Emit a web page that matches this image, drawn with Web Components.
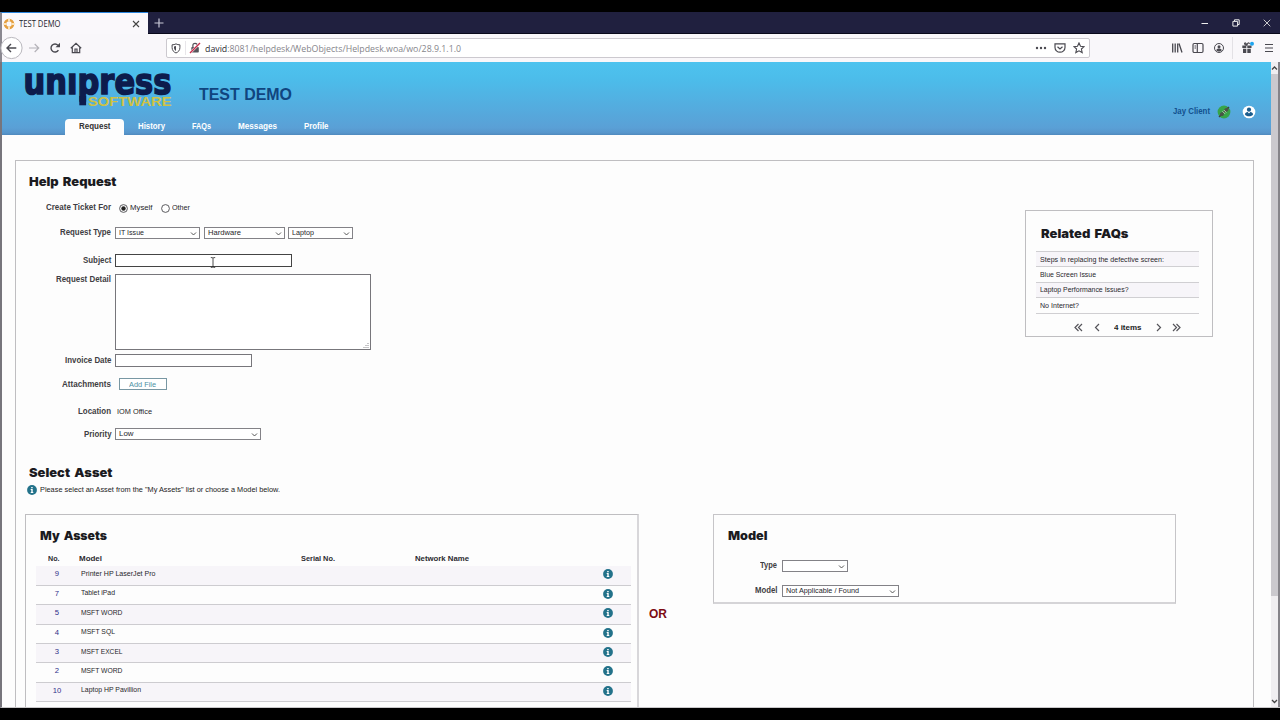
<!DOCTYPE html>
<html lang="en">
<head>
<meta charset="utf-8">
<title>TEST DEMO</title>
<style>
html,body{margin:0;height:100%;overflow:hidden;background:#000}
body{font-family:"Liberation Sans",Arial,sans-serif}
</style>
</head>
<body>
<app-window></app-window>
<script>
const define = (name, css, html) => customElements.define(name, class extends HTMLElement {
  connectedCallback() {
    if (this.shadowRoot) return;
    const root = this.attachShadow({ mode: 'open' });
    root.innerHTML = `<style>*{box-sizing:border-box}${css}</style>` + (typeof html === 'function' ? html(this) : html);
  }
});
const a = (el, n, d = '') => el.getAttribute(n) ?? d;

/* Window: title bar, tool bar, page */
define('app-window', `
:host{box-sizing:border-box;display:flex;flex-direction:column;height:720px;width:1280px;padding:12px 0;background:#000}
.page{flex:1;min-height:0;display:flex;background:#fdfdfd;border-left:2px solid #77757c;border-bottom:1px solid #c9c8ca}
main{flex:1;min-width:0;display:flex;flex-direction:column;overflow:hidden}
`, `<title-bar></title-bar><tool-bar></tool-bar>
<div class="page"><main><site-header></site-header><request-panel></request-panel></main><scroll-bar></scroll-bar></div>`);

define('title-bar', `
:host{display:flex;height:22px;flex:none;background:#20203f;color:#eee;border-bottom:1px solid #08081a;align-items:center;--lift:0px}
.tab{align-self:stretch;margin-bottom:-1px;width:148px;background:#faf8fb;border-top:1px solid #2a84dc;border-left:2px solid #8a8890;display:flex;align-items:center;padding-left:1px;color:#25252d;font:8.500px "Open Sans","Noto Sans",sans-serif}
svg{flex:none}
.tab svg:first-child{margin-right:4px}
.x{margin-left:71.500px}
.plus{margin-left:6px}.sp{flex:1}
.win{display:flex;align-items:center;margin-right:7px}
.win svg+svg{margin-left:23px}
`, `<div class="tab"><svg width="12" height="12" viewBox="0 0 12 12"><circle cx="6" cy="6" r="4" fill="none" stroke="#e5a040" stroke-width="2.600"/><path d="M6 .7v2.600M6 8.700v2.600M.7 6h2.600M8.700 6h2.600" stroke="#fbe3bb" stroke-width="2"/></svg><t-x w="41.500">TEST DEMO</t-x>
<svg class="x" width="8" height="8" viewBox="0 0 8 8" stroke="#444" stroke-width="1.100"><path d="M1 1l6 6M7 1l-6 6"/></svg></div>
<svg class="plus" width="10" height="10" viewBox="0 0 10 10" stroke="#c9c9d8" stroke-width="1.200"><path d="M5 .5v9M.5 5h9"/></svg><span class="sp"></span>
<div class="win"><svg width="8" height="8" viewBox="0 0 8 8" stroke="#eee"><path d="M.5 4.500h6.500"/></svg>
<svg width="8" height="8" viewBox="0 0 8 8" fill="none" stroke="#eee"><path d="M.9 2.400h4.700v4.700H.9zM2.500 2.200V.8h4.700v4.700H5.800"/></svg>
<svg style="margin-right:2px" width="8" height="8" viewBox="0 0 8 8" stroke="#ddd" stroke-width=".9"><path d="M.7.7l6.600 6.600M7.300.7L.7 7.300"/></svg></div>`);

define('tool-bar', `
:host{display:flex;height:28px;flex:none;background:#f9f7fa;border-left:2px solid #8a8890;align-items:center;color:#3c3b42;--lift:0px}
svg{flex:none;fill:none;stroke:#4a4950;stroke-width:1.200}
.back{margin-left:-2px}
.url{margin-left:84px;width:924px;height:20px;background:#fff;border:1px solid #ccc9cf;border-radius:2px;display:flex;align-items:center;padding:0 4px 0 4px;font:9px "Open Sans","Noto Sans",sans-serif;color:#86858b}
.url b{font-weight:400;color:#2c2b32}
.url i{width:1px;height:14px;background:#e8e6ea;margin:0 3px 0 4px}
.sp{flex:1}.sep{width:1px;height:22px;background:#e3e1e5;margin:0 8px 0 7px}
`, `<svg class="back" width="24" height="24" viewBox="0 0 24 24"><circle cx="11.500" cy="12" r="10.600" fill="#fff" stroke="#bab8be" stroke-width="1"/><path stroke-width="1.400" d="M16.300 12H7M11 8l-4 4 4 4"/></svg>
<svg style="margin-left:4px" width="12" height="12" viewBox="0 0 12 12"><path stroke="#b4b2b8" d="M1 6h9.500M6.700 2l4 4-4 4"/></svg>
<svg style="margin-left:9px" width="12" height="12" viewBox="0 0 12 12"><path stroke-width="1.400" d="M9.400 8.200A4 4 0 1 1 9 3.400"/><path fill="#4a4950" stroke="none" d="M11 .8v4.500H6.500z"/></svg>
<svg style="margin-left:9px" width="12" height="12" viewBox="0 0 12 12"><path d="M.8 6.300L6 1.300l5.200 5M2.300 5.400v5.300h7.400V5.400M5 10.500V7h2v3.500"/></svg>
<div class="url"><svg width="10" height="11" viewBox="0 0 10 11"><path stroke-width="1" d="M5 .9C3.800 1.600 2.400 1.800 1.100 1.800v2.800C1.100 7.200 2.600 9 5 10c2.400-1 3.900-2.800 3.900-5.400V1.800C7.600 1.800 6.200 1.600 5 .9z"/><path fill="#4a4950" stroke="none" d="M5 3v5C3.600 7.200 3 6 3 4.600V3.400z"/></svg><i></i>
<svg width="12" height="12" viewBox="0 0 12 12"><rect x="2.300" y="5" width="7.500" height="5.500" rx=".8" fill="#55535a" stroke="none"/><path stroke="#55535a" d="M3.900 5V3.500a2.200 2.200 0 0 1 4.400 0V5"/><path stroke="#fff" stroke-width="2.400" d="M1 11L11 1"/><path stroke="#c5304f" stroke-width="1.500" d="M1 11L11 1"/></svg>
<t-x w="256" style="margin-left:4px"><b>david</b>:8081/helpdesk/WebObjects/Helpdesk.woa/wo/28.9.1.1.0</t-x><span class="sp"></span>
<svg width="12" height="12" viewBox="0 0 12 12"><g fill="#4a4950" stroke="none"><circle cx="2" cy="6" r="1.200"/><circle cx="6" cy="6" r="1.200"/><circle cx="10" cy="6" r="1.200"/></g></svg>
<svg style="margin-left:7px" width="12" height="12" viewBox="0 0 12 12"><path d="M1 1.800h10v3.700a5 4.700 0 0 1-10 0zM3.500 4.700L6 7l2.500-2.300"/></svg>
<svg style="margin-left:7px" width="12" height="12" viewBox="0 0 12 12"><path stroke-width="1.100" d="M6 .9l1.500 3.300 3.600.4-2.700 2.400.8 3.600L6 8.800l-3.200 1.800.8-3.600L.9 4.600l3.600-.4z"/></svg></div><span class="sp"></span>
<svg width="12" height="12" viewBox="0 0 12 12"><path stroke-width="1.300" d="M1.700 1.500v9M4.200 1.500v9M6.700 1.500v9M8 1.500l3 9"/></svg>
<svg style="margin-left:9px" width="12" height="12" viewBox="0 0 12 12"><rect x="1" y="1.500" width="10" height="9" rx="1.200"/><path d="M5.300 1.500v9M2.500 4h1.500M2.500 6h1.500"/></svg>
<svg style="margin-left:9px" width="12" height="12" viewBox="0 0 12 12"><circle cx="6" cy="6" r="4.500" stroke-width="1"/><circle cx="6" cy="4.700" r="1.500" fill="#4a4950" stroke="none"/><path fill="#4a4950" stroke="none" d="M3.200 8.300c.5-2.300 5.100-2.300 5.600 0C7.500 10 4.500 10 3.200 8.300z"/></svg>
<span class="sep"></span>
<svg width="14" height="14" viewBox="0 0 14 14"><g stroke="none" fill="#4a4950"><path d="M1.300 4.500h4v2.400h-4zM6.300 4.500h4.200v2.400H6.300zM2 7.800h3.300V12H2zM6.300 7.800h3.500V12H6.300z"/></g><path d="M5.800 4.500C3 3.800 3.200 1.500 4.500 2c.8.400 1.300 2.500 1.300 2.500s.5-2.100 1.300-2.500c.8-.4 1.400.4 1.100 1"/><circle cx="11" cy="2.800" r="2" fill="#1ea4ee" stroke="none"/></svg>
<svg style="margin:0 6px 0 9px" width="10" height="10" viewBox="0 0 10 10"><path d="M1 1.500h8M1 5h8M1 8.500h8"/></svg>`);

define('scroll-bar', `
:host{display:flex;flex-direction:column;align-items:center;width:9px;flex:none;background:#f0eef1;border-right:2px solid #858389}
i{width:100%;height:522px;background:#cbc9ce}
svg{display:block;fill:none;stroke:#444;stroke-width:1.300}span{flex:1}
`, `<svg width="7" height="12" viewBox="0 0 7 12"><path d="M1 7.500l2.500-2.500L6 7.500"/></svg><i></i><span></span><svg width="7" height="12" viewBox="0 0 7 12"><path d="M1 5l2.500 2.500L6 5"/></svg>`);

define('site-header', `
:host{display:flex;flex:none;height:73px;background:linear-gradient(#4dc3ef 0,#4cbcea 25%,#5aa0d6 90%,#5796cc 97%,#4f89bd);color:#fff;font-weight:700;justify-content:space-between}
.l{display:flex;flex-direction:column}
.brand{display:flex;height:57px}
.brand svg{display:block;margin-left:21px}
h1{margin:22px 0 0 26.500px;font-size:16px;line-height:22px;color:#10457f;--lift:0px}
nav{display:flex;padding-left:63px;height:16px;align-items:stretch}
.user{display:flex;align-items:center;height:20px;margin:40px 15px 0 0;font-size:8.500px;color:#13508e}
`, `<div class="l"><div class="brand"><svg width="149" height="57" viewBox="23 62 149 57">
<text x="23.500" y="93.600" font-family="DejaVu Sans" font-weight="700" font-size="35.500" textLength="148" lengthAdjust="spacingAndGlyphs" fill="#0d1c4c" stroke="#0d1c4c" stroke-width="1.600">unıpress</text>
<rect x="79.300" y="96" width="6.800" height="9.300" fill="#0d1c4c"/>
<text x="88" y="105.600" font-family="Liberation Sans" font-weight="700" font-size="12" textLength="83.500" lengthAdjust="spacingAndGlyphs" fill="#d0c243">SOFTWARE</text></svg>
<h1><t-x w="93">TEST DEMO</t-x></h1></div>
<nav><nav-tab on w="31.500" b="59" label="Request"></nav-tab><nav-tab w="27" b="54" label="History"></nav-tab><nav-tab w="19" b="46" label="FAQs"></nav-tab><nav-tab w="39" b="67" label="Messages"></nav-tab><nav-tab w="24.500" b="51" label="Profile"></nav-tab></nav></div>
<div class="user"><t-x w="37">Jay Client</t-x>
<svg style="margin-left:6.500px" width="14" height="14" viewBox="0 0 14 14"><circle cx="7" cy="7" r="6.400" fill="#37a548"/><path d="M2 12l10-10" stroke="#3b4438" stroke-width="1.500"/><path d="M4.500 7l2.700 2.700L5.600 11 3 10.800 3 8.500zM7 4.500L9.700 7l1.600-1.600.2-2.600-2.600.1z" fill="#4b5447"/><path d="M5.500 6.300L8 8.800M6.800 5l2.500 2.500" stroke="#c4d0bd" stroke-width="1"/></svg>
<svg style="margin-left:11.500px" width="14" height="14" viewBox="0 0 14 14"><circle cx="7" cy="7" r="6.300" fill="#fff"/><circle cx="7" cy="4.700" r="2.100" fill="#1b5d8d"/><path d="M2.900 9.300c.4-1.800 2.300-2.200 2.700-2.200L7 8.600l1.400-1.500c.4 0 2.300.4 2.700 2.200C10 12 4 12 2.900 9.300z" fill="#1b5d8d"/></svg></div>`);

define('nav-tab', `
:host{display:flex;justify-content:center;align-items:center;font-size:8.600px;line-height:14px}
:host([on]){background:#fdfdfd;color:#333;border-radius:4px 4px 0 0}
`, el => `<style>:host{width:${a(el,'b')}px}</style><t-x w="${a(el,'w')}">${a(el,'label')}</t-x>`);

define('big-title', `
:host{display:flex;align-items:center;height:20px;font:900 12px Inter,"Liberation Sans",sans-serif;word-spacing:1.500px;color:#1b1b1f;--lift:0px}
`, el => `<t-x w="${a(el,'w')}">${a(el,'label')}</t-x>`);

define('form-row', `
:host{display:flex;align-items:center;font-size:7.700px;color:#26262a}
.l{flex:none;text-align:right;font-weight:700;font-size:8.700px;color:#3f3e43;margin-right:4px;width:var(--label,95px);display:flex;justify-content:flex-end}
:host([top]){align-items:flex-start}
`, el => `<span class="l"><t-x w="${a(el,'w')}">${a(el,'label')}</t-x></span><slot></slot>`);

define('radio-option', `
:host{display:flex;align-items:center;gap:2px}
svg{display:block}
`, el => `<svg width="9" height="9" viewBox="0 0 9 9"><circle cx="4.500" cy="4.500" r="3.900" fill="#fff" stroke="#4a494e" stroke-width=".9"/>${el.hasAttribute('on')?'<circle cx="4.500" cy="4.500" r="2.200" fill="#222"/>':''}</svg><t-x w="${a(el,'w')}">${a(el,'label')}</t-x>`);

define('select-box', `
:host{display:flex;align-items:center;justify-content:space-between;height:12px;margin-bottom:1px;border:1px solid #838287;background:#fff;padding:0 2px 0 2.500px;--lift:.5px}
svg{display:block;margin-top:2px}
`, el => `<style>:host{width:${a(el,'b')}px}</style><t-x w="${a(el,'w')}">${a(el,'label')}</t-x><svg width="7" height="6" viewBox="0 0 7 6" fill="none" stroke="#444" stroke-width=".9"><path d="M1 1.500L3.500 4 6 1.500"/></svg>`);

define('text-box', `
:host{display:flex;height:13px;border:1px solid #77767b;background:#fff;justify-content:center;align-items:center;flex:none}
:host([area]){height:76px;align-items:flex-end;justify-content:flex-end}
:host([focus]){border-color:#444;padding:3px 0 0 19px}
svg{display:block;flex:none}
`, el => `<style>:host{width:${a(el,'b')}px}</style>` + (el.hasAttribute('area') ? '<svg width="7" height="7" viewBox="0 0 7 7" fill="#8b8a8f"><path d="M4.500 1h1v1h-1zM2.500 3h1v1h-1zM4.500 3h1v1h-1zM.5 5h1v1h-1zM2.500 5h1v1h-1zM4.500 5h1v1h-1z"/></svg>' : el.hasAttribute('focus') ? '<svg width="6" height="11" viewBox="0 0 6 11" fill="none" stroke="#222" stroke-width=".8"><path d="M.8.6h1.500L3 1.200l.7-.6h1.500M3 1v9M.8 10.400h1.500l.7-.6.7.6h1.500"/></svg>' : ''));

define('file-button', `
:host{display:flex;width:48px;height:12px;border:1px solid #7897a3;background:#fff;align-items:center;justify-content:center;color:#4c90a3;margin-left:3.500px;--lift:0px}
`, `<t-x w="27">Add File</t-x>`);

define('info-dot', `:host{display:block;width:10px;height:10px}svg{display:block}`,
`<svg width="10" height="10" viewBox="0 0 10 10"><circle cx="5" cy="5" r="4.900" fill="#23728a"/><path fill="#fff" d="M4.200 1.900h1.500v1.300H4.200zM3.700 4h2v3h.6v.9H3.700V7h.6V4.900h-.6z"/></svg>`);

define('request-panel', `
:host{display:flex;flex-direction:column;margin:25px 17px 0 13px;height:600px;border:1px solid #bfbec1;border-bottom:0;flex:none}
.top{display:flex;justify-content:space-between;height:353px}
.top big-title{margin-left:13px}
form{display:block}
form-row{margin-top:var(--m)}
.note{display:flex;align-items:center;height:13px;margin-top:1px;padding-left:11px;font-size:7.900px;color:#222;gap:3px;--lift:0px}
.bottom{display:flex;align-items:flex-start;padding-left:9px}
.or{width:74px;padding-left:10px;margin-top:92px;font-size:13px;font-weight:700;line-height:15px;color:#7d0c12}
`, `<div class="top"><form>
<big-title style="margin-top:10px" w="87.500" label="Help Request"></big-title>
<form-row style="--m:9px;height:16px" label="Create Ticket For" w="65"><radio-option on style="margin-left:3.500px" label="Myself" w="22.500"></radio-option><radio-option style="margin-left:8.500px" label="Other" w="18"></radio-option></form-row>
<form-row style="--m:9px;height:16px" label="Request Type" w="51"><select-box b="85" label="IT Issue" w="25"></select-box><select-box style="margin-left:4px" b="81" label="Hardware" w="33"></select-box><select-box style="margin-left:3px" b="65" label="Laptop" w="22"></select-box></form-row>
<form-row style="--m:11px;height:17px" label="Subject" w="28.500"><text-box focus b="177"></text-box></form-row>
<form-row top style="--m:5px;height:76px" label="Request Detail" w="55"><text-box area b="256"></text-box></form-row>
<form-row style="height:20px;--lift:.5px" label="Invoice Date" w="46.500"><text-box b="137"></text-box></form-row>
<form-row style="--m:6px;height:16px;--lift:.5px" label="Attachments" w="49"><file-button></file-button></form-row>
<form-row style="--m:12px;height:16px" label="Location" w="33"><t-x style="margin-left:2px" w="35">IOM Office</t-x></form-row>
<form-row style="--m:7px;height:15px" label="Priority" w="27.500"><select-box b="146" label="Low" w="14.500"></select-box></form-row>
<big-title style="margin-top:20px" w="83.500" label="Select Asset"></big-title>
<div class="note"><info-dot></info-dot><t-x w="240">Please select an Asset from the "My Assets" list or choose a Model below.</t-x></div>
</form><faq-card></faq-card></div>
<div class="bottom"><asset-card></asset-card><div class="or"><t-x w="18">OR</t-x></div><model-card></model-card></div>`);

define('faq-card', `
:host{display:block;width:188px;height:127px;margin:49px 40px 0 0;border:1px solid #bfbec1;padding:12px 13px 0 10px;--lift:0px}
big-title{margin:0 0 8px 5px}
.list{border-top:1px solid #d0cfd2}
.list div{height:15.400px;border-bottom:1px solid #d0cfd2;padding-left:3.500px;font-size:7px;color:#29282d;display:flex;align-items:center}
.list div:nth-child(odd){background:#f7f5f9}
.p{display:flex;align-items:center;height:14px;margin-top:7px;padding-left:38px;font-size:7.800px;font-weight:700;color:#222}
svg{fill:none;stroke:#55545a;stroke-width:1.200}
`, `<big-title w="87.500" label="Related FAQs"></big-title>
<div class="list"><div><t-x w="124">Steps in replacing the defective screen:</t-x></div><div><t-x w="56">Blue Screen Issue</t-x></div><div><t-x w="88.500">Laptop Performance Issues?</t-x></div><div><t-x w="39">No Internet?</t-x></div></div>
<div class="p"><svg width="9" height="9" viewBox="0 0 9 9"><path d="M4.500 1L1 4.500 4.500 8M8 1L4.500 4.500 8 8"/></svg><svg style="margin-left:11px" width="7" height="9" viewBox="0 0 7 9"><path d="M5 1L1.500 4.500 5 8"/></svg><t-x style="margin:0 13px 0 13px" w="27.500">4 items</t-x><svg width="7" height="9" viewBox="0 0 7 9"><path d="M2 1l3.500 3.500L2 8"/></svg><svg style="margin-left:10px" width="9" height="9" viewBox="0 0 9 9"><path d="M1 1l3.500 3.500L1 8M4.500 1L8 4.500 4.500 8"/></svg></div>`);

const assets = [[9,'Printer HP LaserJet Pro',74.5],[7,'Tablet iPad',34],[5,'MSFT WORD',41.5],[4,'MSFT SQL',34],[3,'MSFT EXCEL',41.5],[2,'MSFT WORD',41.5],[10,'Laptop HP Pavillion',60]];
define('asset-card', `
:host{display:block;width:614px;height:230px;border:1px solid #bfbec1;border-right:2px solid #d8d7da;padding:10px 6px 0 10px;flex:none}
big-title{margin-left:4px}
.head,asset-row{display:grid;grid-template-columns:43px 222px 114px 1fr 30px}
.head{margin-top:8px;height:13.400px;align-items:center;font-size:8px;font-weight:700;color:#2c2b30}
.head t-x:first-child{margin-left:12px}
`, `<big-title w="67" label="My Assets"></big-title><div class="head"><t-x w="11.500">No.</t-x><t-x w="23">Model</t-x><t-x w="34">Serial No.</t-x><t-x w="54">Network Name</t-x></div>` + assets.map(([n,m,w],i) => `<asset-row ${i%2?'':'odd'} n="${n}" m="${m}" w="${w}"></asset-row>`).join(''));

define('asset-row', `
:host{height:19.400px;border-bottom:1px solid #cdccd0;padding-bottom:2.500px;align-items:center;font-size:7.700px;color:#27262b}
:host([odd]){background:#f7f5f9}
.n{color:#30308a;text-align:center;font-size:7.700px;width:42px;padding-bottom:1px}
t-x{margin-left:1.500px}
info-dot{margin-left:2px}
`, el => `<span class="n">${a(el,'n')}</span><t-x w="${a(el,'w')}">${a(el,'m')}</t-x><span></span><span></span><info-dot></info-dot>`);

define('model-card', `
:host{display:block;width:463px;height:90px;border:1px solid #c6c5c8;border-bottom:2px solid #d5d4d7;padding:10px 0 0 13.500px;--label:49.500px;flex:none}
form-row{height:16px}
`, `<big-title w="39.500" label="Model"></big-title><form-row style="margin-top:13px" label="Type" w="17"><select-box style="margin-left:1px" b="66"></select-box></form-row><form-row style="margin-top:9px" label="Model" w="22.500"><select-box style="margin-left:1px" b="117" label="Not Applicable / Found" w="73"></select-box></form-row>`);

/* Single-line text, set to span the width given in "w" */
customElements.define('t-x', class extends HTMLElement {
  connectedCallback() {
    if (this.shadowRoot) return;
    const root = this.attachShadow({ mode: 'open' });
    root.innerHTML = '<style>:host{display:inline-block;white-space:pre;flex:none}span{display:inline-block;padding-bottom:var(--lift,1.500px);transform-origin:0 50%}</style><span><slot></slot></span>';
    const w = parseFloat(this.getAttribute('w')), n = this.textContent.length;
    if (!w || !n) return;
    const s = root.querySelector('span');
    s.style.transform = `scaleX(${w / s.getBoundingClientRect().width})`;
    this.style.width = w + 'px';
  }
});
</script>
</body>
</html>
